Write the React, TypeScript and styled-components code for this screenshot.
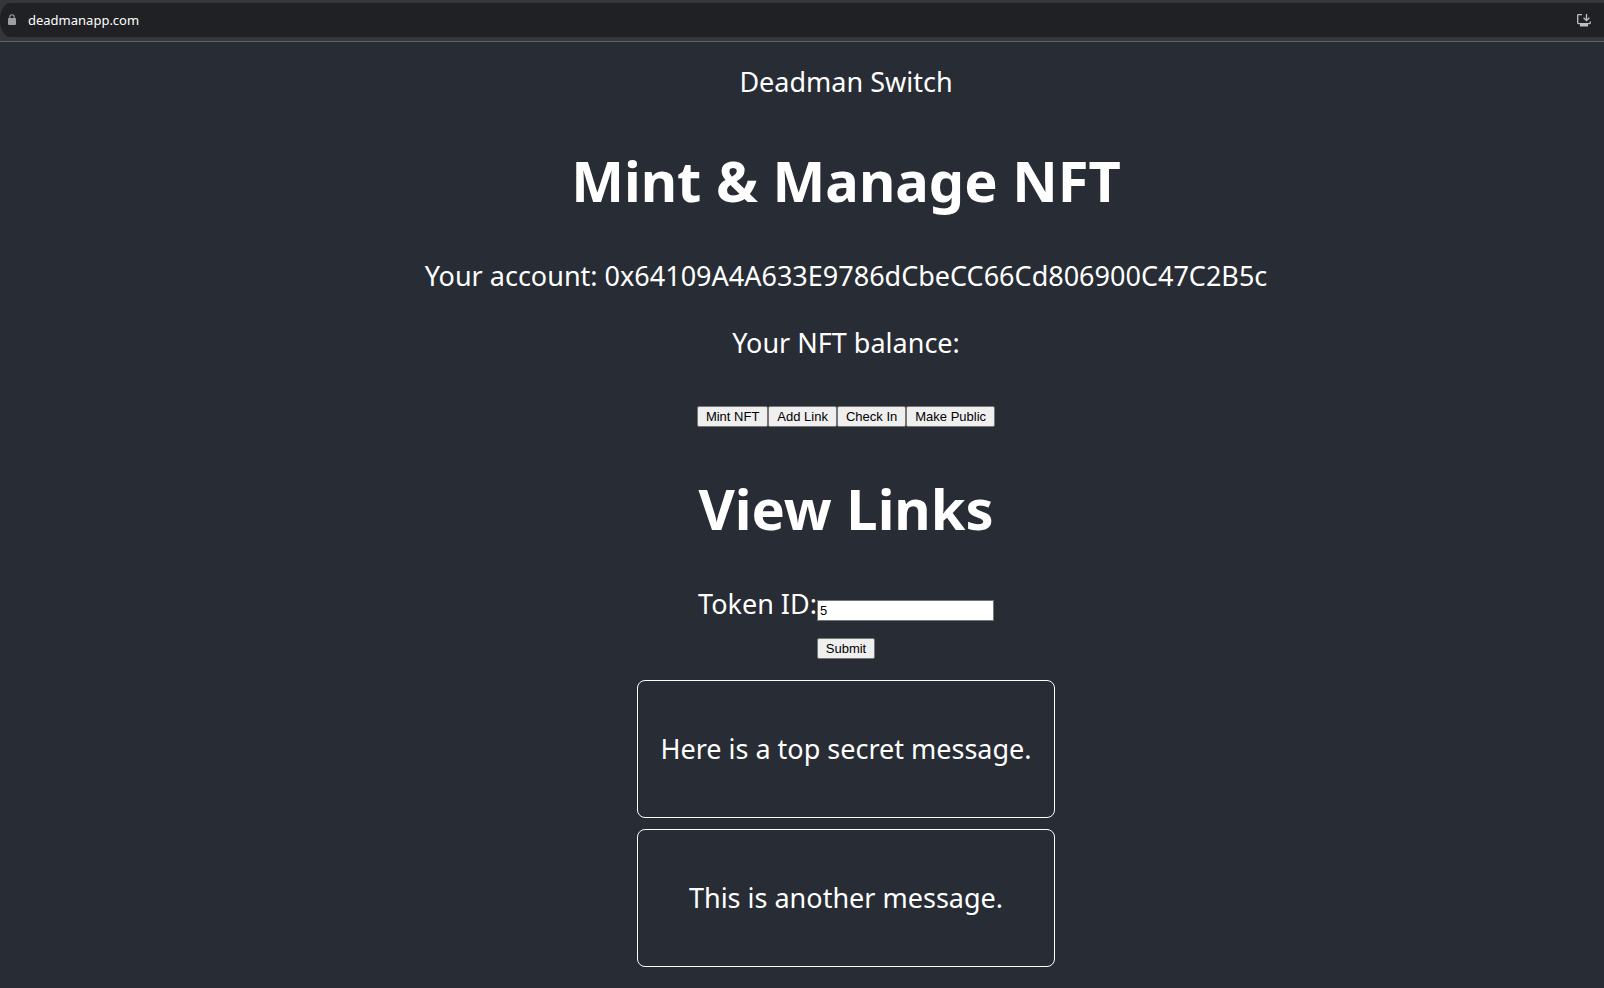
import React, { useState } from "react";
import styled, { createGlobalStyle } from "styled-components";

const GlobalStyle = createGlobalStyle`
  *, *::before, *::after { box-sizing: border-box; }
  body {
    margin: 0;
    background: #282c34;
    font-family: "Segoe UI", "Noto Sans", "Open Sans", sans-serif;
  }
`;

const BrowserBar = styled.header`
  padding: 3px 0 4px;
  background: #35363a;
  border-bottom: 1px solid #5f6063;
`;

const AddressBar = styled.div`
  display: flex;
  align-items: center;
  height: 34px;
  padding: 0 13px 0 7px;
  background: #202124;
  border-radius: 10px 0 0 10px / 17px 0 0 17px;
`;

const Address = styled.span`
  flex: 1;
  margin-left: 11px;
  color: #ffffff;
  font-size: 13px;
  line-height: 18px;
`;

const IconButton = styled.button`
  display: flex;
  padding: 0;
  border: 0;
  background: none;
`;

const Page = styled.main`
  display: flex;
  flex-direction: column;
  align-items: center;
  padding: 20px 0 20px 88px;
  color: #ffffff;
  font-size: 27px;
  line-height: 40px;
  text-align: center;
`;

const Heading = styled.h1`
  margin: 38px 0 36px;
  font-size: 56px;
  font-weight: 700;
  line-height: 80px;
`;

const Text = styled.p`
  margin: 0;
`;

const Details = styled.section`
  display: flex;
  flex-direction: column;
  gap: 27px;
`;

const Actions = styled.div`
  display: flex;
  margin: 43px 0 3px;
`;

const Button = styled.button`
  height: 21px;
  padding: 0 8px;
  border: 1px solid #767676;
  border-radius: 2px;
  background: #efefef;
  color: #000000;
  font-family: Arial, "Liberation Sans", sans-serif;
  font-size: 13px;
  line-height: 15px;
`;

const TokenForm = styled.form`
  display: flex;
  flex-direction: column;
  align-items: center;
  gap: 14px;
`;

const Field = styled.div`
  display: flex;
  align-items: flex-end;
`;

const TokenInput = styled.input`
  width: 177px;
  height: 21px;
  margin-bottom: 3px;
  padding: 1px 2px;
  border: 1px solid #767676;
  border-radius: 0;
  background: #ffffff;
  color: #000000;
  font-family: Arial, "Liberation Sans", sans-serif;
  font-size: 13px;
`;

const Messages = styled.ul`
  display: flex;
  flex-direction: column;
  gap: 11px;
  margin: 21px 0 0;
  padding: 0;
  list-style: none;
`;

const Message = styled.li`
  padding: 48px 22px;
  border: 1px solid #ffffff;
  border-radius: 8px;
`;

const LockIcon = () => (
  <svg width="10" height="12" viewBox="0 0 10 12" aria-hidden="true">
    <rect x="1" y="4" width="8" height="7" rx="1" fill="#9aa0a6" />
    <path d="M2.8 4.500V3a2.200 2.200 0 0 1 4.400 0v1.500" fill="none" stroke="#9aa0a6" strokeWidth="1.100" />
  </svg>
);

const InstallIcon = () => (
  <svg width="14" height="14" viewBox="0 0 14 14" fill="none" aria-hidden="true">
    <path d="M5 1.600H1.500a.8.8 0 0 0-.8.8v7.400a.8.8 0 0 0 .8.8h11a.8.8 0 0 0 .8-.8V8.500" stroke="#c0c0c0" strokeWidth="1.300" />
    <path d="M3 11h8v2.500H3z" fill="#c0c0c0" />
    <path d="M9.500 1v6.500M6.600 4.800l2.900 2.900 2.900-2.900" stroke="#c0c0c0" strokeWidth="1.300" />
  </svg>
);

const actions = ["Mint NFT", "Add Link", "Check In", "Make Public"];
const messages = ["Here is a top secret message.", "This is another message."];

export default function App() {
  const [tokenId, setTokenId] = useState("5");

  return (
    <>
      <GlobalStyle />
      <BrowserBar>
        <AddressBar>
          <LockIcon />
          <Address>deadmanapp.com</Address>
          <IconButton type="button" aria-label="Install app">
            <InstallIcon />
          </IconButton>
        </AddressBar>
      </BrowserBar>
      <Page>
        <Text>Deadman Switch</Text>
        <Heading>Mint &amp; Manage NFT</Heading>
        <Details>
          <Text>Your account: 0x64109A4A633E9786dCbeCC66Cd806900C47C2B5c</Text>
          <Text>Your NFT balance:</Text>
        </Details>
        <Actions>
          {actions.map((action) => (
            <Button type="button" key={action}>{action}</Button>
          ))}
        </Actions>
        <Heading>View Links</Heading>
        <TokenForm onSubmit={(event: React.FormEvent) => event.preventDefault()}>
          <Field>
            <label htmlFor="token-id">Token ID:</label>
            <TokenInput
              id="token-id"
              type="text"
              value={tokenId}
              onChange={(event: React.ChangeEvent<HTMLInputElement>) => setTokenId(event.target.value)}
            />
          </Field>
          <Button type="submit">Submit</Button>
        </TokenForm>
        <Messages>
          {messages.map((message) => (
            <Message key={message}>{message}</Message>
          ))}
        </Messages>
      </Page>
    </>
  );
}
